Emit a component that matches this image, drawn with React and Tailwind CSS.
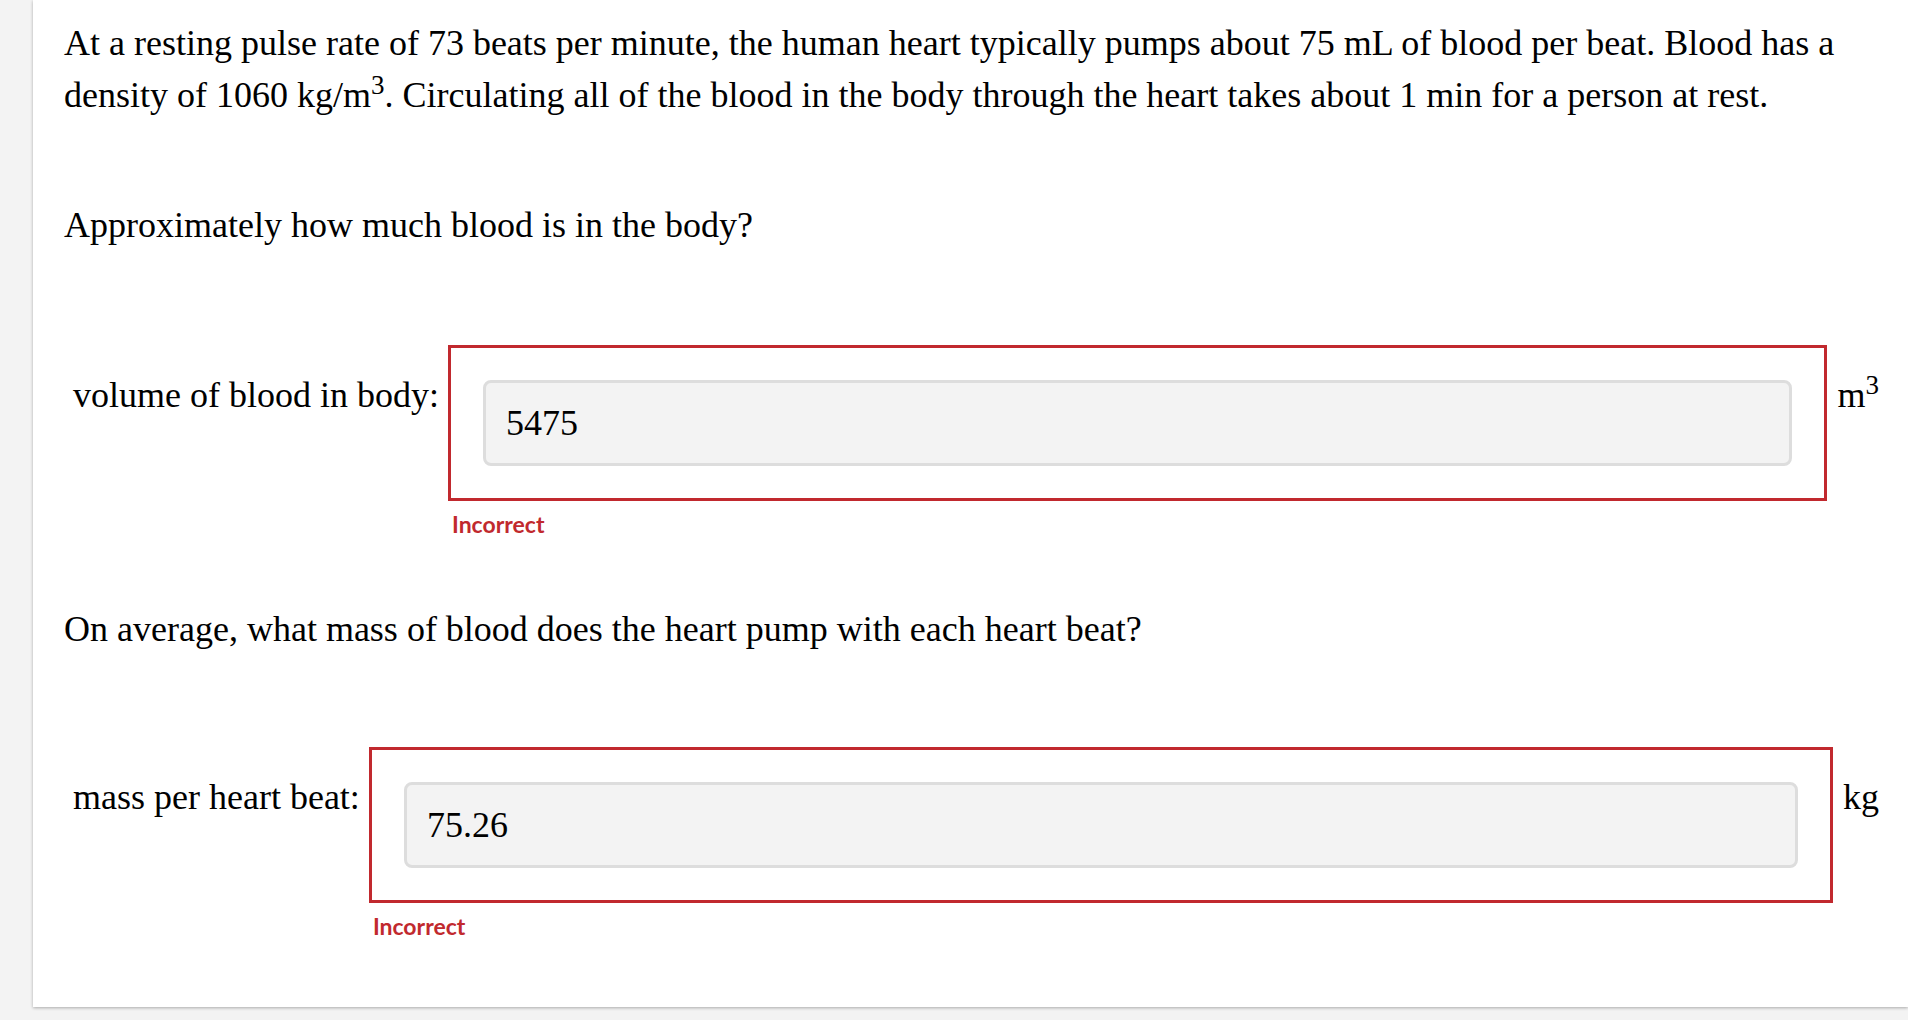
const serif = "font-['Liberation_Serif','Times_New_Roman',serif]";

function AnswerRow({ label, value, unit }) {
  return (
    <div className="flex items-start pl-[9px]">
      <label className="shrink-0 pt-[28px] pr-[9px] leading-[45px]">{label}</label>
      <div className="flex min-w-0 flex-1 flex-col">
        <div className="border-[3px] border-[#c1292e] p-[32px]">
          {/* read-only answer field, drawn as a box so it keeps the serif face */}
          <div className="flex h-[86px] w-full items-center rounded-[8px] border-[3px] border-[#dddddd] bg-[#f3f3f3] pl-[20px]">
            <span className="font-['Liberation_Serif','Times_New_Roman',serif] text-[36px] leading-[45px] text-black">
              {value}
            </span>
          </div>
        </div>
        <div className="mt-[11px] pl-[4px] font-['Lato','Open_Sans',sans-serif] text-[23px] font-bold leading-[24px] text-[#c1292e]">
          Incorrect
        </div>
      </div>
      <div className="shrink-0 pt-[28px] pl-[10px] leading-[45px]">{unit}</div>
    </div>
  );
}

export default function App() {
  return (
    <div className={`min-h-screen bg-[#f3f3f3] pb-[10px] pl-[33px] ${serif}`}>
      <div className="bg-white pb-[69px] pl-[31px] pr-[29px] pt-[17px] text-[36px] leading-[45px] text-black shadow-[0_1px_3px_rgba(0,0,0,0.3)]">
        <p className="leading-[52px]">
          At a resting pulse rate of 73 beats per minute, the human heart typically pumps about 75 mL of blood
          per beat. Blood has a density of 1060 kg/m<sup>3</sup>. Circulating all of the blood in the body through
          the heart takes about 1 min for a person at rest.
        </p>

        <p className="mt-[82px]">Approximately how much blood is in the body?</p>

        <div className="mt-[97px]">
          <AnswerRow
            label="volume of blood in body:"
            value="5475"
            unit={
              <span>
                m<sup>3</sup>
              </span>
            }
          />
        </div>

        <p className="mt-[71px]">On average, what mass of blood does the heart pump with each heart beat?</p>

        <div className="mt-[95px]">
          <AnswerRow label="mass per heart beat:" value="75.26" unit="kg" />
        </div>
      </div>
    </div>
  );
}
